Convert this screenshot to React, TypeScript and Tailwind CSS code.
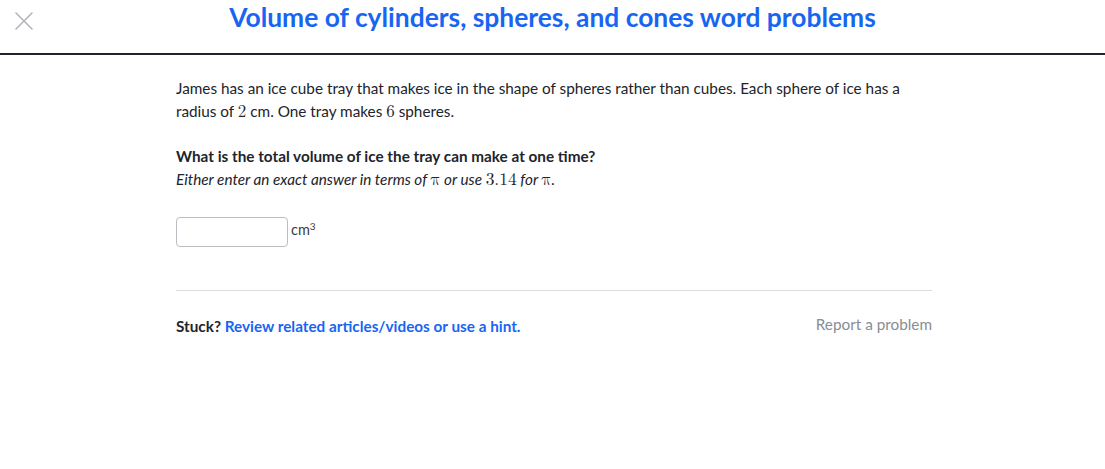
import React from 'react';

const mathFont = "font-['Latin_Modern_Math','DejaVu_Serif',serif] leading-none";

function CloseIcon() {
  return (
    <svg width="18" height="18" viewBox="0 0 18 18" className="text-[#b3b5ba]">
      <path d="M1 1 L17 17 M17 1 L1 17" stroke="currentColor" strokeWidth="1.6" strokeLinecap="round" />
    </svg>
  );
}

export default function App() {
  return (
    <div className="w-[1105px] h-[469px] bg-white font-['Lato','Noto_Sans',sans-serif] text-[#21242c]">
      <header className="relative h-[55px] flex items-center justify-center border-b-2 border-[#21242c]">
        <button className="absolute left-[15px] top-[12px]">
          <CloseIcon />
        </button>
        <h1 className="text-[26.4px] font-bold text-[#1865f2] -mt-[18px]">
          Volume of cylinders, spheres, and cones word problems
        </h1>
      </header>

      <main className="w-[756px] ml-[176px] pt-[22px]">
        <p className="text-[15.3px] leading-[23px]">
          James has an ice cube tray that makes ice in the shape of spheres rather than cubes. Each sphere of ice has a
          radius of <span className={`${mathFont} text-[17px]`}>2</span> cm. One tray makes{' '}
          <span className={`${mathFont} text-[17px]`}>6</span> spheres.
        </p>

        <p className="mt-[22px] text-[15.3px] leading-[23px] font-bold">
          What is the total volume of ice the tray can make at one time?
        </p>
        <p className="text-[15.3px] leading-[23px] italic">
          Either enter an exact answer in terms of <span className={`${mathFont} not-italic text-[17px]`}>π</span> or use{' '}
          <span className={`${mathFont} not-italic text-[17.5px]`}>3.14</span> for{' '}
          <span className={`${mathFont} not-italic text-[17px]`}>π</span>.
        </p>

        <div className="mt-[26px] flex items-start gap-[3px]">
          <input
            className="w-[112px] h-[30px] rounded-[4px] border border-[#babec2] outline-none px-2"
            type="text"
          />
          <span className="text-[14.5px] leading-[20px] mt-[3px] text-[#3b3e40]">
            cm<sup className="text-[10px]">3</sup>
          </span>
        </div>

        <div className="mt-[43px] border-t border-[#dcdcdc]" />

        <div className="mt-[24px] flex justify-between items-center text-[15.3px]">
          <div className="font-bold">
            Stuck? <span className="text-[#1865f2]">Review related articles/videos or use a hint.</span>
          </div>
          <span className="text-[#888d93] -mt-[4px]">Report a problem</span>
        </div>
      </main>
    </div>
  );
}
